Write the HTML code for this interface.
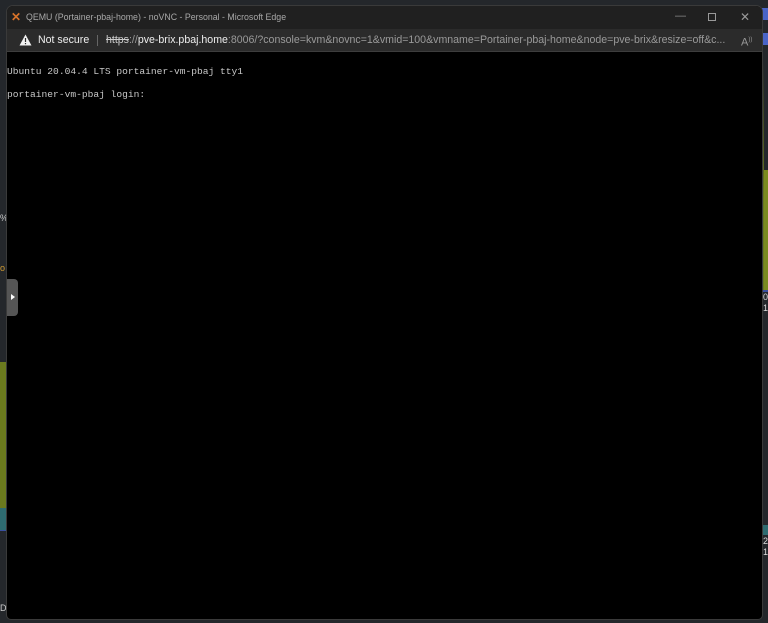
<!DOCTYPE html>
<html><head><style>
*{margin:0;padding:0;box-sizing:border-box}
body{width:768px;height:623px;background:#24272b;position:relative;overflow:hidden;font-family:"Liberation Sans",sans-serif}
.abs{position:absolute}
.win{left:6px;top:5px;width:757px;height:615px;background:#000;border-radius:7px 7px 5px 5px;overflow:hidden;border:1px solid #3a3a3a}
.title{left:0;top:0;width:100%;height:23px;background:#202020;color:#a8a8a8;font-size:8.8px;line-height:23px}
.addr{left:0;top:23px;width:100%;height:23px;background:#2b2b2b;border-bottom:1px solid #3d3d3d;font-size:10.6px;line-height:22px;color:#9a9a9a}
.term{font-family:"Liberation Mono",monospace;font-size:9.6px;color:#c8c8c8;left:0;white-space:pre}
</style></head><body>
<div class="abs" style="left:0;top:362px;width:6px;height:146px;background:#6b7a1e"></div>
<div class="abs" style="left:0;top:508px;width:6px;height:22px;background:#2e6b70"></div>
<div class="abs" style="left:0;top:530px;width:6px;height:1px;background:#3a50a0"></div>
<div class="abs" style="left:0;top:213px;width:6px;height:10px;color:#ccc;font-size:9px">%</div>
<div class="abs" style="left:0;top:263px;width:6px;height:10px;color:#d09a30;font-size:9px">o</div>
<div class="abs" style="left:0;top:603px;width:6px;color:#ccc;font-size:9px">D</div>
<div class="abs" style="left:762px;top:8px;width:6px;height:12px;background:#4a64c8"></div>
<div class="abs" style="left:762px;top:33px;width:6px;height:12px;background:#4a64c8"></div>
<div class="abs" style="left:762px;top:60px;width:2px;height:230px;background:linear-gradient(#24272b,#6b7a1e 60%)"></div>
<div class="abs" style="left:764px;top:170px;width:4px;height:120px;background:#7a8a20"></div>
<div class="abs" style="left:762px;top:290px;width:6px;height:2px;background:#3a50a0"></div>
<div class="abs" style="left:763px;top:292px;color:#ddd;font-size:9px;line-height:11px">0<br>1</div>
<div class="abs" style="left:762px;top:525px;width:6px;height:10px;background:#2e6b70"></div>
<div class="abs" style="left:763px;top:536px;color:#ddd;font-size:9px;line-height:11px">2<br>1</div>

<div class="abs win">
  <div class="abs title">
    <span class="abs" style="left:4px;top:0;color:#d8732a;font-size:12px;font-weight:bold">✕</span>
    <span class="abs" style="left:19px">QEMU (Portainer-pbaj-home) - noVNC - Personal - Microsoft Edge</span>
    <span class="abs" style="left:668px;top:-1px;font-size:11px;color:#888">—</span>
    <span class="abs" style="left:701px;top:7px;width:8px;height:8px;border:1px solid #999"></span>
    <span class="abs" style="left:733px;top:0;font-size:12px;color:#999">✕</span>
  </div>
  <div class="abs addr">
    <svg class="abs" style="left:12px;top:5px" width="13" height="12" viewBox="0 0 13 12"><path d="M6.5 0.5L12.5 11.5H0.5Z" fill="#f0f0f0"/><rect x="5.9" y="4" width="1.2" height="4" fill="#2b2b2b"/><rect x="5.9" y="9" width="1.2" height="1.2" fill="#2b2b2b"/></svg>
    <span class="abs" style="left:31px;color:#eee">Not secure</span>
    <span class="abs" style="left:90px;top:6px;width:1px;height:11px;background:#666"></span>
    <span class="abs" style="left:99px;white-space:nowrap"><span style="color:#ccc;text-decoration:line-through">https</span>://<span style="color:#eee">pve-brix.pbaj.home</span>:8006/?console=kvm&amp;novnc=1&amp;vmid=100&amp;vmname=Portainer-pbaj-home&amp;node=pve-brix&amp;resize=off&amp;c...</span>
    <span class="abs" style="left:734px;color:#999;font-size:11px">A<sup style="font-size:6px">))</sup></span>
  </div>
  <div class="abs term" style="left:0;top:60px">Ubuntu 20.04.4 LTS portainer-vm-pbaj tty1</div>
  <div class="abs term" style="left:0;top:83px">portainer-vm-pbaj login:</div>
  <div class="abs" style="left:0;top:273px;width:11px;height:37px;background:#555;border-radius:0 4px 4px 0"></div>
  <div class="abs" style="left:4px;top:288px;width:0;height:0;border-left:4px solid #fff;border-top:3px solid transparent;border-bottom:3px solid transparent"></div>
</div>
</body></html>
